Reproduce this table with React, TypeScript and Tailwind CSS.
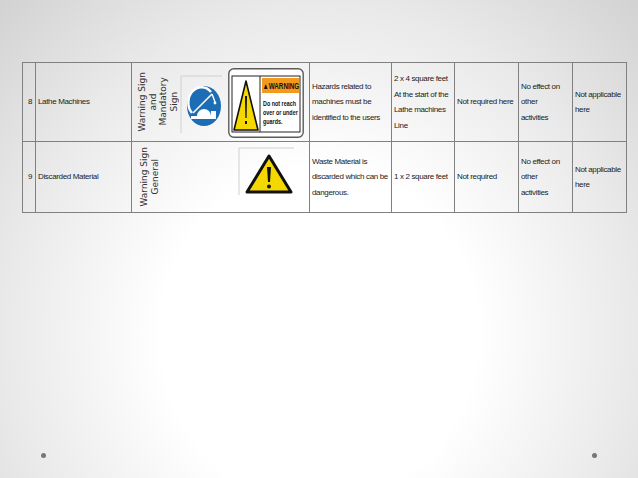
const cellFont = { fontFamily: '"Liberation Sans", Arial, sans-serif' }

function MandatorySign() {
  return (
    <svg width="42" height="58" viewBox="0 0 42 58">
      <path d="M1 58 V1 H42" fill="none" stroke="#d0d0d0" strokeWidth="1" />
      <ellipse cx="24" cy="31" rx="17" ry="20" fill="#1b6db5" />
      {/* guard arc */}
      <path d="M12 38 A13 15 0 0 1 31 17" fill="none" stroke="#fff" strokeWidth="2.4" />
      {/* arm */}
      <path d="M13 38 L32 19" stroke="#fff" strokeWidth="1.6" />
      <path d="M32 19 L35 27" stroke="#fff" strokeWidth="1.4" />
      <circle cx="35" cy="28" r="1.4" fill="#fff" />
      {/* blade */}
      <path d="M17 41 A7 7 0 0 1 31 41 Z" fill="#fff" />
      <path d="M17 41 l1-3 1 2 1-4 1 3 2-4 1 4 1-3 1 3 2-2 1 3 1-2 Z" fill="#fff" />
      {/* table */}
      <rect x="11" y="41" width="25" height="3" fill="#fff" />
      <rect x="31" y="36" width="5" height="5" fill="#fff" />
    </svg>
  )
}

function WarningLabel() {
  const f = "'Liberation Sans', Arial, sans-serif"
  return (
    <svg width="76" height="70" viewBox="0 0 76 70">
      <rect x="0.8" y="0.8" width="74.4" height="68.4" rx="5" fill="#fff" stroke="#5a5a5a" strokeWidth="1.4" />
      <rect x="4" y="8" width="68" height="56" fill="none" stroke="#222" strokeWidth="1" />
      <line x1="32" y1="8" x2="32" y2="64" stroke="#222" strokeWidth="1" />
      <path d="M18 13 L30 62 L6 62 Z" fill="#f5d800" stroke="#111" strokeWidth="1.6" strokeLinejoin="round" />
      <path d="M17 28 L19 28 L18.6 50 L17.4 50 Z" fill="#111" />
      <rect x="17" y="53" width="2" height="3" fill="#111" />
      <rect x="34" y="10" width="37" height="15" fill="#f39a1e" />
      <g fontFamily={f} fontWeight="700" fill="#111">
        <text transform="translate(34.5 21) scale(1 1.35)" fontSize="6.3">▲WARNING</text>
        <text transform="translate(35 38) scale(1 1.35)" fontSize="5.4">Do not reach</text>
        <text transform="translate(35 47) scale(1 1.35)" fontSize="5.4">over or under</text>
        <text transform="translate(35 56) scale(1 1.35)" fontSize="5.4">guards.</text>
      </g>
    </svg>
  )
}

function WarningTriangle() {
  return (
    <svg width="56" height="48" viewBox="0 0 56 48">
      <path d="M1 48 V1 H56" fill="none" stroke="#d0d0d0" strokeWidth="1" />
      <path d="M31 9 L53 45 L9 45 Z" fill="#f5d800" stroke="#111" strokeWidth="3" strokeLinejoin="round" />
      <path d="M29 20 L33 20 L32 35 L30 35 Z" fill="#111" />
      <circle cx="31" cy="39.5" r="2" fill="#111" />
    </svg>
  )
}

function Vertical({ lines }: { lines: string[] }) {
  return (
    <div
      className="[writing-mode:vertical-rl] rotate-180 text-center text-[9px] leading-[10.5px] text-[#333]"
      style={{ fontFamily: '"DejaVu Sans", Verdana, sans-serif' }}
    >
      {lines.map((l, i) => (
        <div key={i}>{l}</div>
      ))}
    </div>
  )
}

function Txt({ lines }: { lines: string[] }) {
  return (
    <>
      {lines.map((l, i) => (
        <div key={i} className="whitespace-nowrap">{l}</div>
      ))}
    </>
  )
}

export default function App() {
  const td = 'border border-[#808080] align-middle pl-[2px] pr-0 text-[8px] tracking-[-0.35px] leading-[15.5px] text-[#222]'

  return (
    <div className="w-[638px] h-[478px] bg-[radial-gradient(ellipse_at_50%_70%,#ffffff_35%,#e9e9e9_70%,#d2d2d2_100%)] flex flex-col overflow-hidden">
      <div className="pt-[62px] pl-[22px]">
        <table className="border-collapse table-fixed w-[604px]" style={cellFont}>
          <colgroup>
            <col className="w-[13px]" />
            <col className="w-[96px]" />
            <col className="w-[178px]" />
            <col className="w-[82px]" />
            <col className="w-[63px]" />
            <col className="w-[64px]" />
            <col className="w-[54px]" />
            <col className="w-[54px]" />
          </colgroup>
          <tbody>
            <tr className="h-[79px]">
              <td className={td + ' text-center px-0'}>8</td>
              <td className={td}>Lathe Machines</td>
              <td className="border border-[#808080] p-0">
                <div className="flex items-center h-[77px]">
                  <div className="w-[48px] pl-[4px] flex justify-center">
                    <Vertical lines={['Warning Sign', 'and', 'Mandatory', 'Sign']} />
                  </div>
                  <div className="mt-[4px]">
                    <MandatorySign />
                  </div>
                  <div className="ml-[6px] mt-[2px]">
                    <WarningLabel />
                  </div>
                </div>
              </td>
              <td className={td}>
                <Txt lines={['Hazards related to', 'machines must be', 'identified to the users']} />
              </td>
              <td className={td}>
                <Txt lines={['2 x 4 square feet', 'At the start of the', 'Lathe machines', 'Line']} />
              </td>
              <td className={td}>
                <Txt lines={['Not required here']} />
              </td>
              <td className={td}>
                <Txt lines={['No effect on', 'other', 'activities']} />
              </td>
              <td className={td}>
                <Txt lines={['Not applicable', 'here']} />
              </td>
            </tr>
            <tr className="h-[71px]">
              <td className={td + ' text-center px-0'}>9</td>
              <td className={td}>Discarded Material</td>
              <td className="border border-[#808080] p-0">
                <div className="flex items-center h-[69px]">
                  <div className="w-[30px] pl-[4px] flex justify-center">
                    <Vertical lines={['Warning Sign', 'General']} />
                  </div>
                  <div className="ml-[76px] -mt-[12px]">
                    <WarningTriangle />
                  </div>
                </div>
              </td>
              <td className={td}>
                <Txt lines={['Waste Material is', 'discarded which can be', 'dangerous.']} />
              </td>
              <td className={td}>
                <Txt lines={['1 x 2 square feet']} />
              </td>
              <td className={td}>
                <Txt lines={['Not required']} />
              </td>
              <td className={td}>
                <Txt lines={['No effect on', 'other', 'activities']} />
              </td>
              <td className={td}>
                <Txt lines={['Not applicable', 'here']} />
              </td>
            </tr>
          </tbody>
        </table>
      </div>
      <div className="mt-auto mb-[20px] flex justify-between px-[41px]">
        <div className="w-[5px] h-[5px] rounded-full bg-[#777]" />
        <div className="w-[5px] h-[5px] rounded-full bg-[#777]" />
      </div>
    </div>
  )
}
